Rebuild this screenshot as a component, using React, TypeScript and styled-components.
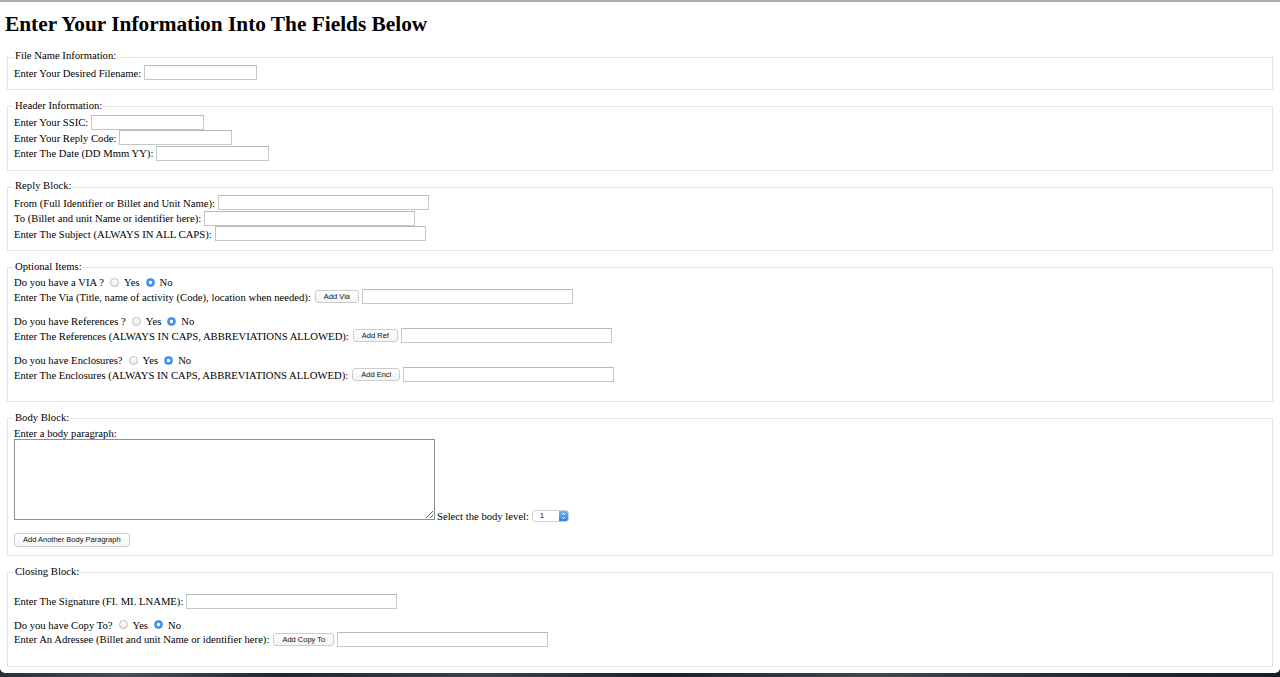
import React from "react";
import styled, { createGlobalStyle } from "styled-components";

const GlobalStyle = createGlobalStyle`
  html, body {
    margin: 0;
    padding: 0;
  }
  body {
    font-family: "Liberation Serif", "Times New Roman", serif;
    font-size: 10.67px;
    color: #000;
    background: #1d2028;
  }
`;

type RowKind = "field" | "choice" | "text";

const rowHeight: Record<RowKind, string> = {
  field: "15.5px",
  choice: "13.5px",
  text: "12px",
};

const Field: React.FC<{ label: string; wide?: boolean; button?: string }> = ({ label, wide, button }) => (
  <SRow $kind="field">
    <span>{label}</span>
    {button && <SButton type="button">{button}</SButton>}
    <STextInput type="text" $wide={wide} />
  </SRow>
);

const Choice: React.FC<{ question: string; name: string }> = ({ question, name }) => (
  <SRow $kind="choice">
    <span>{question}</span>
    <SRadio name={name} />
    <span>Yes</span>
    <SRadio name={name} defaultChecked />
    <span>No</span>
  </SRow>
);

export default function App() {
  return (
    <>
      <GlobalStyle />
      <SScreen>
        <SWindow>
          <STitle>Enter Your Information Into The Fields Below</STitle>

          <SSection>
            <SLegend>File Name Information:</SLegend>
            <Field label="Enter Your Desired Filename:" />
          </SSection>

          <SSection>
            <SLegend>Header Information:</SLegend>
            <Field label="Enter Your SSIC:" />
            <Field label="Enter Your Reply Code:" />
            <Field label="Enter The Date (DD Mmm YY):" />
          </SSection>

          <SSection>
            <SLegend>Reply Block:</SLegend>
            <Field label="From (Full Identifier or Billet and Unit Name):" wide />
            <Field label="To (Billet and unit Name or identifier here):" wide />
            <Field label="Enter The Subject (ALWAYS IN ALL CAPS):" wide />
          </SSection>

          <SSection>
            <SLegend>Optional Items:</SLegend>
            <Choice question="Do you have a VIA ?" name="via" />
            <Field label="Enter The Via (Title, name of activity (Code), location when needed):" button="Add Via" wide />
            <SSpacer $size={10} />
            <Choice question="Do you have References ?" name="ref" />
            <Field label="Enter The References (ALWAYS IN CAPS, ABBREVIATIONS ALLOWED):" button="Add Ref" wide />
            <SSpacer $size={10} />
            <Choice question="Do you have Enclosures?" name="encl" />
            <Field label="Enter The Enclosures (ALWAYS IN CAPS, ABBREVIATIONS ALLOWED):" button="Add Encl" wide />
            <SSpacer $size={10} />
          </SSection>

          <SSection>
            <SLegend>Body Block:</SLegend>
            <SRow $kind="text">Enter a body paragraph:</SRow>
            <SBodyRow>
              <SBodyArea />
              <SLevelLabel>Select the body level:</SLevelLabel>
              <SSelectBox>
                <SLevelSelect defaultValue="1">
                  <option>1</option>
                  <option>2</option>
                  <option>3</option>
                  <option>4</option>
                </SLevelSelect>
                <SStepper>
                  <svg width="5" height="8" viewBox="0 0 5 8">
                    <path d="M0.8 3 L2.5 1.2 L4.2 3" fill="none" stroke="#fff" strokeWidth="0.9" />
                    <path d="M0.8 5 L2.5 6.8 L4.2 5" fill="none" stroke="#fff" strokeWidth="0.9" />
                  </svg>
                </SStepper>
              </SSelectBox>
            </SBodyRow>
            <SSpacer $size={11} />
            <SButton type="button" $block>Add Another Body Paragraph</SButton>
          </SSection>

          <SSection>
            <SLegend>Closing Block:</SLegend>
            <SSpacer $size={13} />
            <Field label="Enter The Signature (FI. MI. LNAME):" wide />
            <SSpacer $size={9} />
            <Choice question="Do you have Copy To?" name="copy" />
            <Field label="Enter An Adressee (Billet and unit Name or identifier here):" button="Add Copy To" wide />
            <SSpacer $size={10.5} />
          </SSection>
        </SWindow>
        <SDesktop />
      </SScreen>
    </>
  );
}

const SScreen = styled.div`
  display: flex;
  flex-direction: column;
  height: 100vh;
  overflow: hidden;
`;

const SWindow = styled.main`
  flex: 1;
  min-height: 0;
  overflow: hidden;
  padding: 0 5px;
  background: #fff;
  border-top: 2px solid #adadad;
  border-radius: 0 0 5px 5px;
`;

const SDesktop = styled.div`
  flex-shrink: 0;
  height: 4px;
  background: linear-gradient(
    90deg,
    #2b2e37,
    #4b4d56 10%,
    #22252e 22%,
    #3e414a 38%,
    #1c1f28 52%,
    #45474f 68%,
    #262932 84%,
    #1a1d25
  );
`;

const STitle = styled.h1`
  margin: 10px 0 15px;
  font-size: 21.33px;
  line-height: 24px;
  font-weight: bold;
`;

const SSection = styled.fieldset`
  min-width: 0;
  margin: 0 2px 10.5px;
  padding: 2px 6px 8.5px;
  border: 1px solid #e3e3e3;
`;

const SLegend = styled.legend`
  padding: 0 1px 4px;
  font-size: 10.67px;
  line-height: 8px;
`;

const SRow = styled.div<{ $kind: RowKind }>`
  display: flex;
  align-items: center;
  height: ${(p) => rowHeight[p.$kind]};
  white-space: nowrap;
`;

const SSpacer = styled.div<{ $size: number }>`
  height: ${(p) => p.$size}px;
`;

const STextInput = styled.input<{ $wide?: boolean }>`
  box-sizing: border-box;
  width: ${(p) => (p.$wide ? 211 : 113)}px;
  height: 15px;
  margin: 0 0 0 3px;
  padding: 0 2px;
  border: 1px solid #c6c6c6;
  border-top-color: #b8b8b8;
  background: #fff;
  font: 9px "Liberation Sans", Arial, sans-serif;
`;

const SButton = styled.button<{ $block?: boolean }>`
  box-sizing: border-box;
  display: block;
  height: ${(p) => (p.$block ? 14 : 13)}px;
  margin: 0 0 0 ${(p) => (p.$block ? 0 : 4)}px;
  padding: 0 8px;
  border: 1px solid #cccccc;
  border-radius: 3px;
  background: linear-gradient(#ffffff, #f4f4f4);
  color: #111;
  font: 7.5px "Liberation Sans", Arial, sans-serif;
  line-height: 11px;
  white-space: nowrap;
`;

const SRadio = styled.input.attrs({ type: "radio" })`
  appearance: none;
  box-sizing: border-box;
  flex-shrink: 0;
  width: 9px;
  height: 9px;
  margin: 0 5px 0 6px;
  border: 1px solid #bcbcbc;
  border-radius: 50%;
  background: linear-gradient(#ffffff, #ededed);

  &:checked {
    border-color: #3a85dc;
    background: radial-gradient(circle, #fff 0 1.3px, #4b99ec 1.9px);
  }
`;

const SBodyRow = styled.div`
  display: flex;
  align-items: flex-end;
  white-space: nowrap;
`;

const SBodyArea = styled.textarea`
  box-sizing: border-box;
  width: 421px;
  height: 81px;
  margin: 0 2px 2px 0;
  padding: 2px;
  border: 1px solid #8e8e8e;
  font: 10.67px "Liberation Mono", monospace;
  resize: both;
`;

const SLevelLabel = styled.span`
  line-height: 12px;
`;

const SSelectBox = styled.span`
  box-sizing: border-box;
  display: inline-flex;
  width: 37px;
  height: 12px;
  margin-left: 3px;
  border: 1px solid #d2d2d2;
  border-radius: 3px;
  overflow: hidden;
  background: #fff;
`;

const SLevelSelect = styled.select`
  appearance: none;
  flex: 1;
  min-width: 0;
  height: 100%;
  margin: 0;
  padding: 0 0 0 7px;
  border: 0;
  outline: none;
  background: transparent;
  color: #000;
  font: 7px "Liberation Sans", Arial, sans-serif;
`;

const SStepper = styled.span`
  display: flex;
  align-items: center;
  justify-content: center;
  width: 9px;
  background: linear-gradient(#72b4f8, #2e7ee3);
`;
